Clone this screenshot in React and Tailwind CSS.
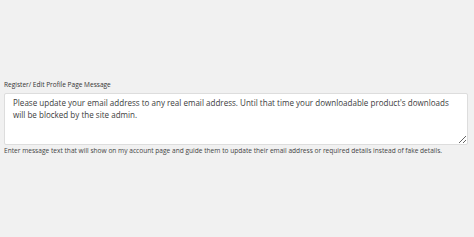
export default function App() {
  return (
    <div
      className="w-[474px] h-[237px] bg-[#f1f1f1] text-[#444]"
      style={{ fontFamily: '"Open Sans", "Noto Sans", sans-serif' }}
    >
      <div className="pt-[80px] px-[4px]">
        <label className="block text-[6.55px] leading-[9px] text-[#333] mb-[4px]">
          Register/ Edit Profile Page Message
        </label>
        <textarea
          className="block w-[464px] h-[52px] bg-white border border-[#ddd] rounded-[2px] px-[8px] pt-[3px] text-[8.05px] leading-[12px] text-[#3c3c3c] resize-y outline-none"
          defaultValue="Please update your email address to any real email address. Until that time your downloadable product's downloads will be blocked by the site admin."
        />
        <p className="text-[6.6px] leading-[10px] text-[#444] mt-[1px]">
          Enter message text that will show on my account page and guide them to update their email address or required details instead of fake details.
        </p>
      </div>
    </div>
  )
}
